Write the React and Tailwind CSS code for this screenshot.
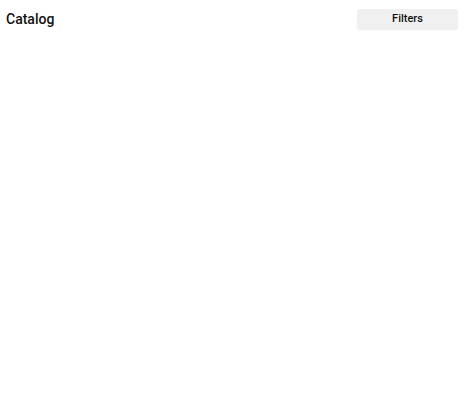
export default function App() {
  return (
    <div className="min-h-screen bg-white" style={{ fontFamily: "Roboto, 'Noto Sans', sans-serif" }}>
      <div className="flex items-center justify-between pl-[6px] pr-4 pt-[9px]">
        <h1 className="text-[14px] font-medium leading-[20px] text-[#111]">Catalog</h1>
        <button className="h-5 w-[101px] rounded-[3px] bg-[#f0f0f0] text-[11px] font-medium leading-5 text-[#111] shadow-[0_1px_1px_rgba(0,0,0,0.08)]">
          Filters
        </button>
      </div>
    </div>
  );
}
